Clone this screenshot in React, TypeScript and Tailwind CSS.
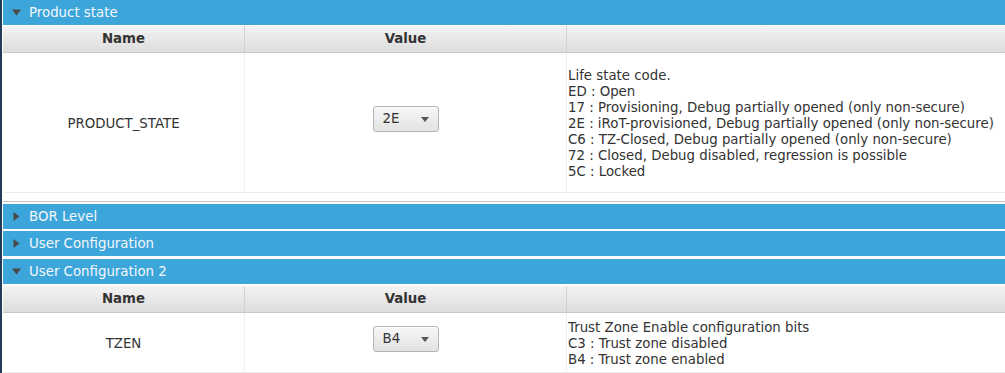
type Row = {
  name: string;
  value: string;
  desc: string[];
  height: string;
};

type Section = {
  title: string;
  open: boolean;
  rows?: Row[];
};

const sections: Section[] = [
  {
    title: "Product state",
    open: true,
    rows: [
      {
        name: "PRODUCT_STATE",
        value: "2E",
        height: "h-[140px]",
        desc: [
          "Life state code.",
          "ED : Open",
          "17 : Provisioning, Debug partially opened (only non-secure)",
          "2E : iRoT-provisioned, Debug partially opened (only non-secure)",
          "C6 : TZ-Closed, Debug partially opened (only non-secure)",
          "72 : Closed, Debug disabled, regression is possible",
          "5C : Locked",
        ],
      },
    ],
  },
  { title: "BOR Level", open: false },
  { title: "User Configuration", open: false },
  {
    title: "User Configuration 2",
    open: true,
    rows: [
      {
        name: "TZEN",
        value: "B4",
        height: "h-[60px]",
        desc: [
          "Trust Zone Enable configuration bits",
          "C3 : Trust zone disabled",
          "B4 : Trust zone enabled",
        ],
      },
    ],
  },
];

const Caret = ({ open }: { open: boolean }) =>
  open ? (
    <svg width="9" height="7" viewBox="0 0 9 7" className="shrink-0">
      <path d="M0 0.5 L9 0.5 L4.5 6.5 Z" fill="#4a4a4a" />
    </svg>
  ) : (
    <svg width="7" height="9" viewBox="0 0 7 9" className="ml-[1px] mr-[1px] shrink-0">
      <path d="M0.5 0 L6.5 4.5 L0.5 9 Z" fill="#4a4a4a" />
    </svg>
  );

const Combo = ({ value }: { value: string }) => (
  <div className="mb-[7px] flex h-[26px] w-[66px] items-center justify-between rounded-[3px] border border-[#b4b4b4] bg-gradient-to-b from-[#f7f7f7] to-[#e2e2e2] pl-[9px] pr-[9px] text-[13.33px] text-[#333] shadow-[inset_0_1px_0_#ffffff]">
    <span>{value}</span>
    <svg width="8" height="5" viewBox="0 0 8 5">
      <path d="M0 0 L8 0 L4 5 Z" fill="#555" />
    </svg>
  </div>
);

const Table = ({ rows }: { rows: Row[] }) => (
  <div className="bg-white">
    <div className="grid h-[27px] grid-cols-[242px_322px_1fr] border-b border-[#c8c8c8] bg-gradient-to-b from-[#f3f3f3] to-[#dddddd] text-[13.33px] font-bold text-[#333]">
      <div className="flex items-center justify-center border-r border-[#d2d2d2]">Name</div>
      <div className="flex items-center justify-center border-r border-[#d2d2d2]">Value</div>
      <div />
    </div>
    {rows.map((row) => (
      <div
        key={row.name}
        className={`grid ${row.height} grid-cols-[242px_322px_1fr] border-b border-[#ececec] text-[13.33px] text-[#333]`}
      >
        <div className="flex items-center justify-center border-r border-[#efefef] pt-[2px]">
          {row.name}
        </div>
        <div className="flex items-center justify-center border-r border-[#efefef]">
          <Combo value={row.value} />
        </div>
        <div className="flex flex-col justify-center pl-[1px] pt-[2px] leading-[16px]">
          {row.desc.map((line) => (
            <div key={line} className="whitespace-nowrap">
              {line}
            </div>
          ))}
        </div>
      </div>
    ))}
  </div>
);

export default function App() {
  return (
    <div
      className="flex h-[373px] w-[1005px] overflow-hidden bg-white"
      style={{ fontFamily: '"DejaVu Sans", "Liberation Sans", sans-serif' }}
    >
      <div className="w-[2px] shrink-0 bg-[#223a5c]" />
      <div className="flex min-w-0 flex-1 flex-col pl-px">
        {sections.map((s, i) => (
          <div key={s.title} className={i === 0 ? "" : i === 3 ? "mt-[3px]" : "mt-[2px]"}>
            <div className="flex h-[25px] items-center gap-[8px] bg-[#3ca6db] pl-[9px] text-[13.33px] text-[#f4f7fa]">
              <Caret open={s.open} />
              <span>{s.title}</span>
            </div>
            {s.open && s.rows && (
              <div className={i === 0 ? "border-b border-[#c4c4c4] pb-[8px] pt-px" : "pt-[2px]"}>
                <Table rows={s.rows} />
              </div>
            )}
          </div>
        ))}
      </div>
    </div>
  );
}
